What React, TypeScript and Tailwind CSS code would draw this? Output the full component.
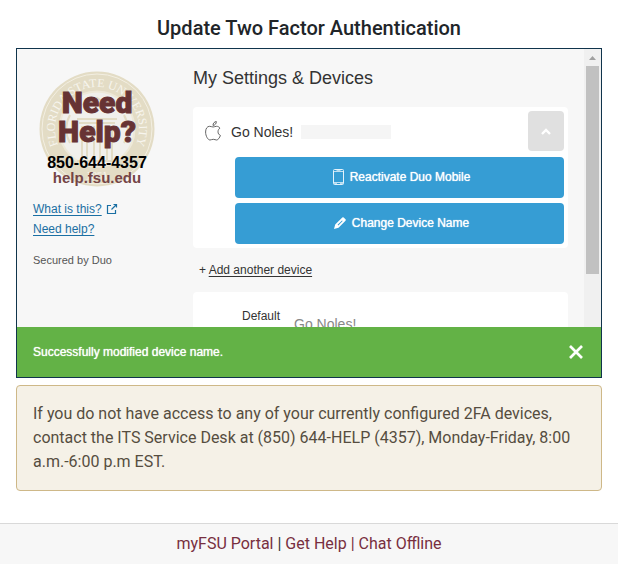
import React, { useState } from "react"

const arial = "font-['Liberation_Sans',Arial,sans-serif]"

const HelpSeal = () => (
    <svg viewBox="0 0 116 124" className="ml-1.5 h-[124px] w-[116px]" role="img" aria-label="Need Help? 850-644-4357 help.fsu.edu">
        <defs>
            <path id="ring-top" d="M 31 90.200 A 42 42 0 1 1 85 90.200" />
            <path id="ring-bottom" d="M 30 101 A 51 51 0 0 0 86 101" />
        </defs>
        <circle cx="58" cy="58" r="57.5" fill="#e3dcc5" />
        <circle cx="58" cy="58" r="55" fill="none" stroke="#f3efe2" strokeWidth="1" />
        <circle cx="58" cy="58" r="37.5" fill="#f1f0ec" stroke="#eee9d8" strokeWidth="2" />
        <g fill="none" stroke="#e3dcc5" strokeWidth="2">
            <path d="M38 48h40M40 52h36M43 55v34M48 55v34M55 55v34M61 55v34M68 55v34M73 55v34M38 90h40" />
            <path d="M44 34c4-6 8-2 14-7 6 5 10 1 14 7M31 44c-5 9-5 19 0 28M85 44c5 9 5 19 0 28" />
        </g>
        <text fill="#f7f5ee" className="font-['Liberation_Serif',serif] text-[12px]">
            <textPath href="#ring-top" startOffset="50%" textAnchor="middle">FLORIDA STATE UNIVERSITY</textPath>
        </text>
        <text fill="#f7f5ee" className="font-['Liberation_Serif',serif] text-[12px]">
            <textPath href="#ring-bottom" startOffset="50%" textAnchor="middle">1851</textPath>
        </text>
        <g textAnchor="middle" fill="#673334" stroke="#673334" strokeWidth="1" className="font-['Roboto',sans-serif] text-[30px] font-black">
            <text x="58" y="42">Need</text>
            <text x="58" y="71">Help?</text>
        </g>
        <g textAnchor="middle" className="font-['Liberation_Sans',sans-serif] font-bold">
            <text x="58" y="97" fill="#000" className="text-[16px]">850-644-4357</text>
            <text x="58" y="112" fill="#744446" className="text-[15px]">help.fsu.edu</text>
        </g>
    </svg>
)

const ExternalIcon = () => (
    <svg viewBox="0 0 12 12" className="h-3 w-3" fill="none" stroke="#1a6fa3" strokeWidth="1.2">
        <path d="M5 2.500H1.500v8h8V7" />
        <path d="M5.500 6.500L10 2M7.500 1.500h3v3" />
    </svg>
)

const AppleIcon = () => (
    <svg viewBox="0 0 16 20" className="h-5 w-4" fill="none" stroke="#555" strokeWidth="0.9" strokeLinejoin="round">
        <path d="M8.100 6C6.900 6 6 5.300 4.500 5.300 2.200 5.300.6 7.600.6 11c0 4 2.300 8 4.400 8 1.200 0 1.800-.7 3.300-.7s2 .7 3.200.7c1.700 0 3.200-2.400 3.900-4.600-1.500-.7-2.400-1.900-2.400-3.600s.8-2.900 2-3.700c-.9-1.200-2.100-1.800-3.400-1.800C10.200 5.300 9.200 6 8.100 6z" />
        <path d="M8 4.400C7.900 2.300 9.400.8 11.300.5c.2 2-1.200 3.700-3.300 3.900z" />
    </svg>
)

const PhoneIcon = () => (
    <svg viewBox="0 0 11 16" className="h-4 w-[11px]" fill="none" stroke="#e4f3fb">
        <rect x="0.5" y="0.5" width="10" height="15" rx="1" />
        <path d="M1 2.500h9M1 13.500h9" strokeWidth="0.8" />
        <path d="M1 14.500h3M7 14.500h3M3.500 1.500h4" strokeWidth="0.7" />
    </svg>
)

const PencilIcon = () => (
    <svg viewBox="0 0 12 12" className="h-3 w-3" fill="#fff">
        <path d="M8.300.5Q9 0 9.700.5L11.500 2.300Q12.100 3 11.500 3.700L4.500 10.800 0 12 1.200 7.500zM4.300 8.500L8.700 4.100 8 3.400 3.600 7.800z" fillRule="evenodd" />
    </svg>
)

const App = () => {
    const [open, setOpen] = useState(true)
    const [notice, setNotice] = useState(true)

    return (
        <div className="flex min-h-screen flex-col bg-white font-['Roboto',sans-serif]">
            <main className="flex-1 px-4 pt-4 pb-8">
                <h1 className="text-center text-xl leading-6 font-medium text-[#212529]">Update Two Factor Authentication</h1>

                <section className={`${arial} mt-2 flex h-[330px] flex-col border border-[#10344c] bg-[#f7f7f7]`}>
                    <div className="flex min-h-0 flex-1">
                        <div className="flex flex-1 gap-4 overflow-hidden px-4">
                            <aside className="w-36 shrink-0 pt-[22px] text-xs leading-5">
                                <HelpSeal />
                                <ul className="mt-1 text-[#1a6fa3]">
                                    <li className="flex items-center gap-1">
                                        <a href="#what" className="underline underline-offset-2">What is this?</a>
                                        <ExternalIcon />
                                    </li>
                                    <li><a href="#help" className="underline underline-offset-2">Need help?</a></li>
                                </ul>
                                <p className="mt-3 text-[11px] leading-[18px] text-[#555]">Secured by Duo</p>
                            </aside>

                            <div className="min-w-0 flex-1 pt-4 text-[#333]">
                                <h2 className="text-lg leading-[26px]">My Settings &amp; Devices</h2>

                                <div className="mt-4 rounded-sm bg-white p-1">
                                    <div className="flex h-10 items-center pl-2">
                                        <AppleIcon />
                                        <span className="ml-2.5 pt-0.5 text-sm leading-5">Go Noles!</span>
                                        <span className="mt-0.5 ml-2 h-3.5 w-[90px] bg-[#f5f5f5]"></span>
                                        <button type="button" aria-label="Toggle device options" onClick={() => setOpen(!open)} className="ml-auto flex h-10 w-9 items-center justify-center rounded-sm bg-[#e0e0e0]">
                                            <svg viewBox="0 0 10 7" className="h-[7px] w-2.5" fill="none" stroke="#fff" strokeWidth="2.4">
                                                <path d="M1 6l4-4 4 4" />
                                            </svg>
                                        </button>
                                    </div>
                                    {open && (
                                        <div className="mt-1.5 ml-[38px] flex flex-col gap-[5px] text-xs text-white">
                                            <button type="button" className="flex h-[41px] items-center justify-center gap-1.5 rounded-sm bg-[#369dd4] pb-0.5 pl-1 [text-shadow:0_0_1px_#fff]">
                                                <PhoneIcon />
                                                Reactivate Duo Mobile
                                            </button>
                                            <button type="button" className="flex h-[41px] items-center justify-center gap-1.5 rounded-sm bg-[#369dd4] pb-0.5 pl-1 [text-shadow:0_0_1px_#fff]">
                                                <PencilIcon />
                                                Change Device Name
                                            </button>
                                        </div>
                                    )}
                                </div>

                                <p className="mt-3 pl-1.5 text-xs leading-5">
                                    + <a href="#add" className="underline underline-offset-2">Add another device</a>
                                </p>

                                <div className="mt-3 flex h-24 gap-3.5 rounded-sm bg-white pl-[49px]">
                                    <span className="pt-3.5 text-xs leading-5">Default</span>
                                    <span className="pt-[22px] text-sm leading-5 text-[#888]">Go Noles!</span>
                                </div>
                            </div>
                        </div>

                        <div className="flex w-[17px] flex-col items-center bg-[#f0f0f0]">
                            <div className="flex h-[17px] items-center">
                                <svg viewBox="0 0 7 4" className="h-1 w-[7px]" fill="#a0a0a0">
                                    <path d="M0 4L3.500 0 7 4z" />
                                </svg>
                            </div>
                            <div className="h-52 w-[13px] bg-[#c1c1c1]"></div>
                        </div>
                    </div>

                    {notice && (
                        <div role="status" className="flex h-[50px] shrink-0 items-center justify-between bg-[#63b246] px-4 text-xs text-white [text-shadow:0_0_1px_#fff]">
                            <p>Successfully modified device name.</p>
                            <button type="button" aria-label="Close" onClick={() => setNotice(false)}>
                                <svg viewBox="0 0 18 18" className="h-[18px] w-[18px]" fill="none" stroke="#fff" strokeWidth="2.7">
                                    <path d="M3 3l12 12M15 3L3 15" />
                                </svg>
                            </button>
                        </div>
                    )}
                </section>

                <div className="mt-[7px] rounded border border-[#ceb888] bg-[#f5f1e7] p-4 text-base leading-6 text-[#554d40]">
                    If you do not have access to any of your currently configured 2FA devices, contact the ITS Service Desk at (850) 644-HELP (4357), Monday-Friday, 8:00 a.m.-6:00 p.m EST.
                </div>
            </main>

            <footer className="border-t border-[#d9d9d9] bg-[#f7f7f7] py-2 text-center text-base leading-6 text-[#782f40]">
                <a href="#portal">myFSU Portal</a> <span className="text-[#333]">|</span> <a href="#gethelp">Get Help</a> | <a href="#chat">Chat Offline</a>
            </footer>
        </div>
    )
}

export default App
